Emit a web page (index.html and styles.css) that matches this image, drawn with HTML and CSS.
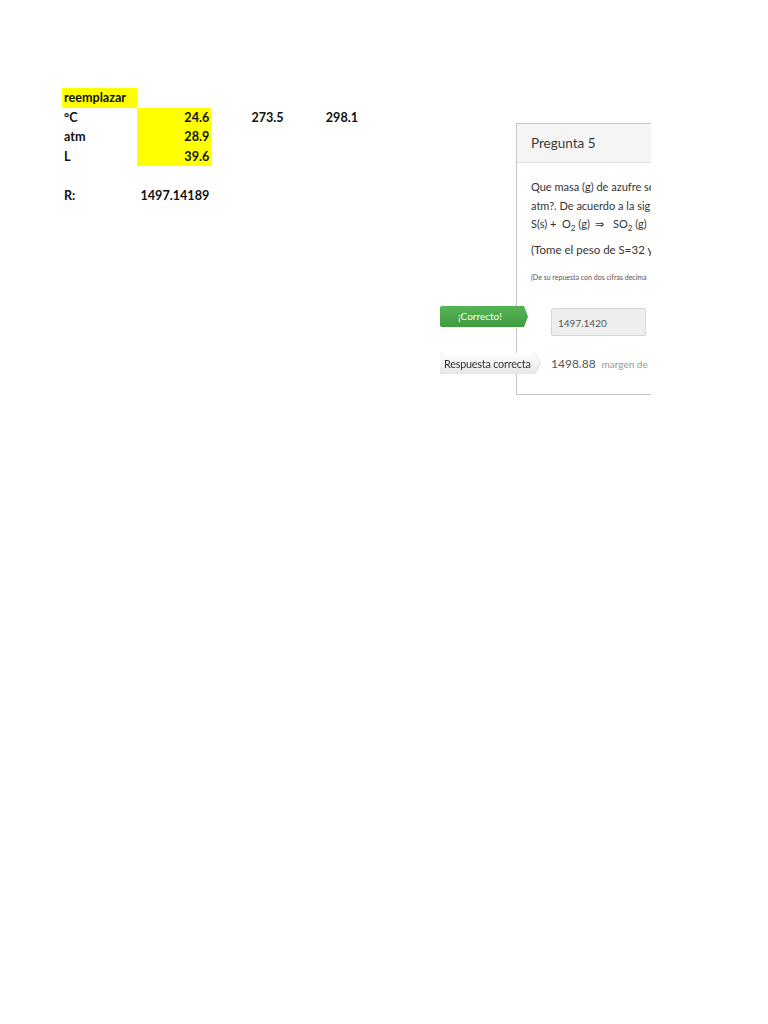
FILE: index.html
```html
<!DOCTYPE html>
<html lang="es">
<head>
<meta charset="utf-8">
<title>Pregunta 5</title>
<link rel="stylesheet" href="styles.css">
</head>
<body>
<div class="page">
  <div class="sheet">
    <div class="row"><div class="cell a hl">reemplazar</div><div class="cell"></div><div class="cell"></div><div class="cell"></div></div>
    <div class="row"><div class="cell a">°C</div><div class="cell num hl">24.6</div><div class="cell num">273.5</div><div class="cell num">298.1</div></div>
    <div class="row"><div class="cell a">atm</div><div class="cell num hl">28.9</div><div class="cell"></div><div class="cell"></div></div>
    <div class="row"><div class="cell a">L</div><div class="cell num hl">39.6</div><div class="cell"></div><div class="cell"></div></div>
    <div class="row"><div class="cell a"></div><div class="cell"></div><div class="cell"></div><div class="cell"></div></div>
    <div class="row"><div class="cell a">R:</div><div class="cell num">1497.14189</div><div class="cell"></div><div class="cell"></div></div>
  </div>

  <div class="quiz">
    <div class="card">
      <div class="card-head">Pregunta 5</div>
      <div class="card-body">
        <p class="q">Que masa (g) de azufre se<br>atm?. De acuerdo a la sig<br>S(s) +&nbsp; O<sub>2</sub> (g) &nbsp;⇒&nbsp;&nbsp; SO<sub>2</sub> (g)</p>
        <p class="note">(Tome el peso de S=32 y</p>
        <p class="tiny">(De su repuesta con dos cifras decima</p>
        <div class="answer">
          <div class="tag-wrap"><div class="tag green">¡Correcto!</div></div>
          <div class="input">1497.1420</div>
        </div>
        <div class="answer second">
          <div class="tag-wrap grey-wrap"><div class="tag grey">Respuesta correcta</div></div>
          <span class="correct">1498.88</span><span class="margin">margen de</span>
        </div>
      </div>
    </div>
  </div>
</div>
</body>
</html>
```

FILE: styles.css
```css
html, body {
  margin: 0;
  padding: 0;
  background: #ffffff;
}

.page {
  display: flex;
  align-items: flex-start;
  padding: 88px 0 0 62px;
}

/* spreadsheet */
.sheet {
  display: flex;
  flex-direction: column;
  width: 298px;
  font-family: Lato, "Liberation Sans", sans-serif;
  font-weight: 700;
  font-size: 12.6px;
  color: #111;
}

.row {
  display: flex;
  height: 19.6px;
}

.cell {
  width: 74.5px;
  line-height: 19.6px;
  padding: 0 2px;
  box-sizing: border-box;
  white-space: nowrap;
}

.cell.num {
  text-align: right;
}

.cell.a {
  width: 75px;
}

.hl {
  background: #ffff00;
}

/* quiz screenshot */
.quiz {
  margin: 35px 0 0 80px;
  width: 211px;
  overflow: hidden;
  padding-bottom: 4px;
  font-family: Lato, "Open Sans", sans-serif;
  color: #333;
}

.card {
  margin-left: 76px;
  width: 420px;
  border: 1px solid #c4c4c4;
}

.card-head {
  height: 38px;
  line-height: 38px;
  padding-left: 14px;
  background: #f5f5f5;
  border-bottom: 1px solid #dedede;
  font-size: 13.5px;
  color: #3a3a3a;
}

.card-body {
  padding: 15px 0 20px 14px;
}

.card-body p {
  margin: 0;
  white-space: nowrap;
}

.q {
  font-size: 11px;
  line-height: 18.5px;
}

.q sub {
  font-size: 8px;
  line-height: 0;
}

.note {
  margin-top: 7.5px !important;
  font-size: 11.5px;
  line-height: 18px;
}

.tiny {
  margin-top: 13px !important;
  font-size: 7px;
  line-height: 10px;
  color: #555;
}

.answer {
  display: flex;
  align-items: flex-start;
  margin: 24px 0 0 -91px;
  white-space: nowrap;
}

.answer.second {
  margin-top: 17px;
  align-items: center;
}

.tag-wrap {
  position: relative;
  z-index: 1;
  flex: none;
}

.grey-wrap {
  filter: drop-shadow(0 0 0.6px #9a9a9a);
}

.tag {
  height: 21px;
  line-height: 21px;
  font-size: 10px;
  border-radius: 2px 0 0 2px;
  white-space: nowrap;
}

.tag.green {
  width: 88px;
  padding-right: 8px;
  box-sizing: border-box;
  text-align: center;
  color: #ffffff;
  background: linear-gradient(#56b456, #3f9b3f);
  clip-path: polygon(0 0, 84px 0, 88px 50%, 84px 100%, 0 100%);
}

.tag.grey {
  width: 101px;
  padding-left: 4px;
  box-sizing: border-box;
  font-size: 10.8px;
  color: #333;
  background: linear-gradient(#ffffff, #e6e6e6);
  clip-path: polygon(0 0, 95px 0, 101px 50%, 95px 100%, 0 100%);
  letter-spacing: -0.2px;
}

.input {
  margin: 2px 0 0 23px;
  width: 95px;
  height: 28px;
  line-height: 28px;
  box-sizing: border-box;
  padding-left: 6px;
  background: #eeeeee;
  border: 1px solid #d4d4d4;
  border-radius: 2px;
  font-size: 10px;
  color: #555;
}

.correct {
  margin-left: 10px;
  font-size: 12px;
  color: #555;
}

.margin {
  margin-left: 6px;
  font-size: 10px;
  color: #999;
}
```
